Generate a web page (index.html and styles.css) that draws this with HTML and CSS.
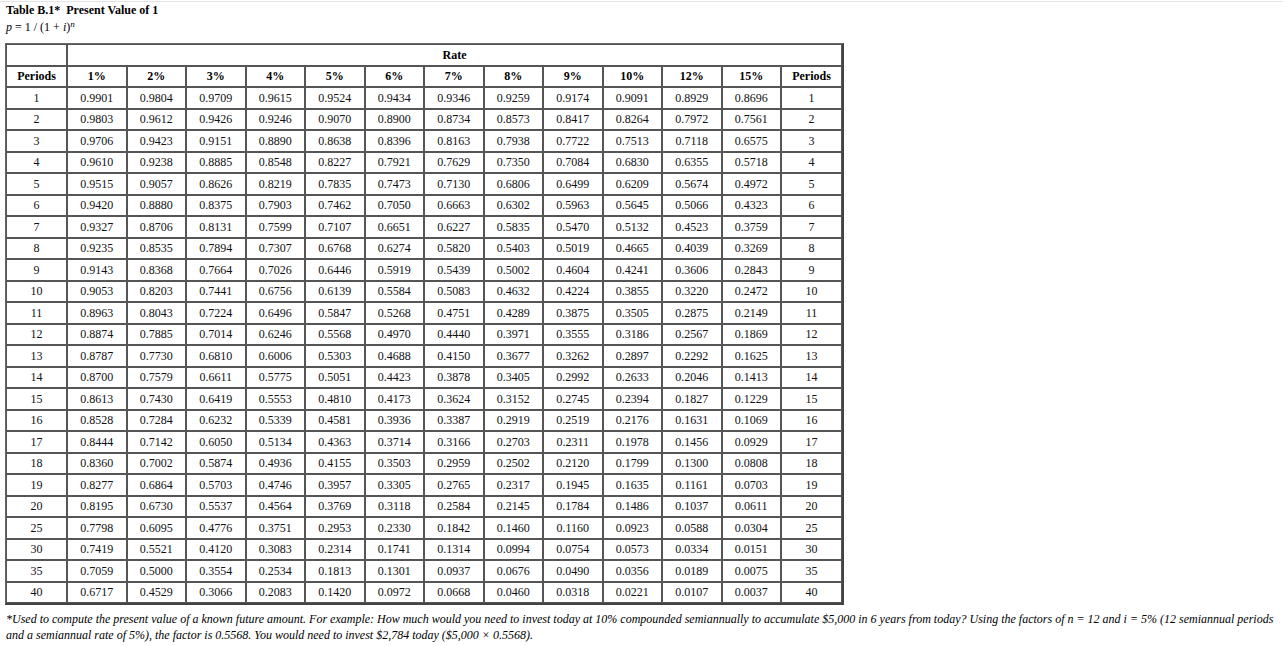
FILE: index.html
```html
<!DOCTYPE html>
<html>
<head>
<meta charset="utf-8">
<link rel="stylesheet" href="styles.css">
</head>
<body>
<div class="page">
  <div class="title">Table B.1*&nbsp; Present Value of 1</div>
  <div class="formula"><i>p</i> = 1 / (1 + <i>i</i>)<sup><i>n</i></sup></div>
  <table class="pv">
    <colgroup>
      <col class="pcol"><col><col><col><col><col><col><col><col><col><col><col><col><col class="pcol">
    </colgroup>
    <thead>
      <tr><th></th><th colspan="13">Rate</th></tr>
      <tr><th>Periods</th><th>1%</th><th>2%</th><th>3%</th><th>4%</th><th>5%</th><th>6%</th><th>7%</th><th>8%</th><th>9%</th><th>10%</th><th>12%</th><th>15%</th><th>Periods</th></tr>
    </thead>
    <tbody>
      <tr><td>1</td><td>0.9901</td><td>0.9804</td><td>0.9709</td><td>0.9615</td><td>0.9524</td><td>0.9434</td><td>0.9346</td><td>0.9259</td><td>0.9174</td><td>0.9091</td><td>0.8929</td><td>0.8696</td><td>1</td></tr>
      <tr><td>2</td><td>0.9803</td><td>0.9612</td><td>0.9426</td><td>0.9246</td><td>0.9070</td><td>0.8900</td><td>0.8734</td><td>0.8573</td><td>0.8417</td><td>0.8264</td><td>0.7972</td><td>0.7561</td><td>2</td></tr>
      <tr><td>3</td><td>0.9706</td><td>0.9423</td><td>0.9151</td><td>0.8890</td><td>0.8638</td><td>0.8396</td><td>0.8163</td><td>0.7938</td><td>0.7722</td><td>0.7513</td><td>0.7118</td><td>0.6575</td><td>3</td></tr>
      <tr><td>4</td><td>0.9610</td><td>0.9238</td><td>0.8885</td><td>0.8548</td><td>0.8227</td><td>0.7921</td><td>0.7629</td><td>0.7350</td><td>0.7084</td><td>0.6830</td><td>0.6355</td><td>0.5718</td><td>4</td></tr>
      <tr><td>5</td><td>0.9515</td><td>0.9057</td><td>0.8626</td><td>0.8219</td><td>0.7835</td><td>0.7473</td><td>0.7130</td><td>0.6806</td><td>0.6499</td><td>0.6209</td><td>0.5674</td><td>0.4972</td><td>5</td></tr>
      <tr><td>6</td><td>0.9420</td><td>0.8880</td><td>0.8375</td><td>0.7903</td><td>0.7462</td><td>0.7050</td><td>0.6663</td><td>0.6302</td><td>0.5963</td><td>0.5645</td><td>0.5066</td><td>0.4323</td><td>6</td></tr>
      <tr><td>7</td><td>0.9327</td><td>0.8706</td><td>0.8131</td><td>0.7599</td><td>0.7107</td><td>0.6651</td><td>0.6227</td><td>0.5835</td><td>0.5470</td><td>0.5132</td><td>0.4523</td><td>0.3759</td><td>7</td></tr>
      <tr><td>8</td><td>0.9235</td><td>0.8535</td><td>0.7894</td><td>0.7307</td><td>0.6768</td><td>0.6274</td><td>0.5820</td><td>0.5403</td><td>0.5019</td><td>0.4665</td><td>0.4039</td><td>0.3269</td><td>8</td></tr>
      <tr><td>9</td><td>0.9143</td><td>0.8368</td><td>0.7664</td><td>0.7026</td><td>0.6446</td><td>0.5919</td><td>0.5439</td><td>0.5002</td><td>0.4604</td><td>0.4241</td><td>0.3606</td><td>0.2843</td><td>9</td></tr>
      <tr><td>10</td><td>0.9053</td><td>0.8203</td><td>0.7441</td><td>0.6756</td><td>0.6139</td><td>0.5584</td><td>0.5083</td><td>0.4632</td><td>0.4224</td><td>0.3855</td><td>0.3220</td><td>0.2472</td><td>10</td></tr>
      <tr><td>11</td><td>0.8963</td><td>0.8043</td><td>0.7224</td><td>0.6496</td><td>0.5847</td><td>0.5268</td><td>0.4751</td><td>0.4289</td><td>0.3875</td><td>0.3505</td><td>0.2875</td><td>0.2149</td><td>11</td></tr>
      <tr><td>12</td><td>0.8874</td><td>0.7885</td><td>0.7014</td><td>0.6246</td><td>0.5568</td><td>0.4970</td><td>0.4440</td><td>0.3971</td><td>0.3555</td><td>0.3186</td><td>0.2567</td><td>0.1869</td><td>12</td></tr>
      <tr><td>13</td><td>0.8787</td><td>0.7730</td><td>0.6810</td><td>0.6006</td><td>0.5303</td><td>0.4688</td><td>0.4150</td><td>0.3677</td><td>0.3262</td><td>0.2897</td><td>0.2292</td><td>0.1625</td><td>13</td></tr>
      <tr><td>14</td><td>0.8700</td><td>0.7579</td><td>0.6611</td><td>0.5775</td><td>0.5051</td><td>0.4423</td><td>0.3878</td><td>0.3405</td><td>0.2992</td><td>0.2633</td><td>0.2046</td><td>0.1413</td><td>14</td></tr>
      <tr><td>15</td><td>0.8613</td><td>0.7430</td><td>0.6419</td><td>0.5553</td><td>0.4810</td><td>0.4173</td><td>0.3624</td><td>0.3152</td><td>0.2745</td><td>0.2394</td><td>0.1827</td><td>0.1229</td><td>15</td></tr>
      <tr><td>16</td><td>0.8528</td><td>0.7284</td><td>0.6232</td><td>0.5339</td><td>0.4581</td><td>0.3936</td><td>0.3387</td><td>0.2919</td><td>0.2519</td><td>0.2176</td><td>0.1631</td><td>0.1069</td><td>16</td></tr>
      <tr><td>17</td><td>0.8444</td><td>0.7142</td><td>0.6050</td><td>0.5134</td><td>0.4363</td><td>0.3714</td><td>0.3166</td><td>0.2703</td><td>0.2311</td><td>0.1978</td><td>0.1456</td><td>0.0929</td><td>17</td></tr>
      <tr><td>18</td><td>0.8360</td><td>0.7002</td><td>0.5874</td><td>0.4936</td><td>0.4155</td><td>0.3503</td><td>0.2959</td><td>0.2502</td><td>0.2120</td><td>0.1799</td><td>0.1300</td><td>0.0808</td><td>18</td></tr>
      <tr><td>19</td><td>0.8277</td><td>0.6864</td><td>0.5703</td><td>0.4746</td><td>0.3957</td><td>0.3305</td><td>0.2765</td><td>0.2317</td><td>0.1945</td><td>0.1635</td><td>0.1161</td><td>0.0703</td><td>19</td></tr>
      <tr><td>20</td><td>0.8195</td><td>0.6730</td><td>0.5537</td><td>0.4564</td><td>0.3769</td><td>0.3118</td><td>0.2584</td><td>0.2145</td><td>0.1784</td><td>0.1486</td><td>0.1037</td><td>0.0611</td><td>20</td></tr>
      <tr><td>25</td><td>0.7798</td><td>0.6095</td><td>0.4776</td><td>0.3751</td><td>0.2953</td><td>0.2330</td><td>0.1842</td><td>0.1460</td><td>0.1160</td><td>0.0923</td><td>0.0588</td><td>0.0304</td><td>25</td></tr>
      <tr><td>30</td><td>0.7419</td><td>0.5521</td><td>0.4120</td><td>0.3083</td><td>0.2314</td><td>0.1741</td><td>0.1314</td><td>0.0994</td><td>0.0754</td><td>0.0573</td><td>0.0334</td><td>0.0151</td><td>30</td></tr>
      <tr><td>35</td><td>0.7059</td><td>0.5000</td><td>0.3554</td><td>0.2534</td><td>0.1813</td><td>0.1301</td><td>0.0937</td><td>0.0676</td><td>0.0490</td><td>0.0356</td><td>0.0189</td><td>0.0075</td><td>35</td></tr>
      <tr><td>40</td><td>0.6717</td><td>0.4529</td><td>0.3066</td><td>0.2083</td><td>0.1420</td><td>0.0972</td><td>0.0668</td><td>0.0460</td><td>0.0318</td><td>0.0221</td><td>0.0107</td><td>0.0037</td><td>40</td></tr>
    </tbody>
  </table>
  <p class="note">*Used to compute the present value of a known future amount. For example: How much would you need to invest today at 10% compounded semiannually to accumulate $5,000 in 6 years from today? Using the factors of n = 12 and i = 5% (12 semiannual periods and a semiannual rate of 5%), the factor is 0.5568. You would need to invest $2,784 today ($5,000 × 0.5568).</p>
</div>
</body>
</html>
```

FILE: styles.css
```css
html, body {
  margin: 0;
  padding: 0;
  background: #fff;
}
body {
  font-family: "Liberation Serif", "Times New Roman", serif;
  font-size: 12px;
  color: #000;
}
.page {
  border-top: 1px solid #e4e4e4;
  margin-top: 1px;
  padding: 0 0 0 6px;
}
.title {
  font-weight: bold;
  line-height: 14px;
  padding-top: 1px;
}
.formula {
  line-height: 14px;
  margin-top: 3px;
}
.formula sup {
  font-size: 9px;
  line-height: 0;
  vertical-align: 4px;
}
.pv {
  margin-top: 9px;
  margin-left: -1px;
  width: 839px;
  table-layout: fixed;
  border-collapse: separate;
  border-spacing: 0;
  border-style: solid;
  border-width: 1px 2px 2px 1px;
  border-color: #666 #444 #444 #666;
}
.pv col.pcol {
  width: 61px;
}
.pv th, .pv td {
  border: 1px solid #555;
  padding: 0;
  height: 19.5px;
  text-align: center;
  font-size: 12px;
  line-height: 14px;
}
.pv th {
  font-weight: bold;
}
.pv td {
  color: #111;
}
.note {
  margin: 6px 0 0 0;
  font-style: italic;
  line-height: 16px;
}
```
